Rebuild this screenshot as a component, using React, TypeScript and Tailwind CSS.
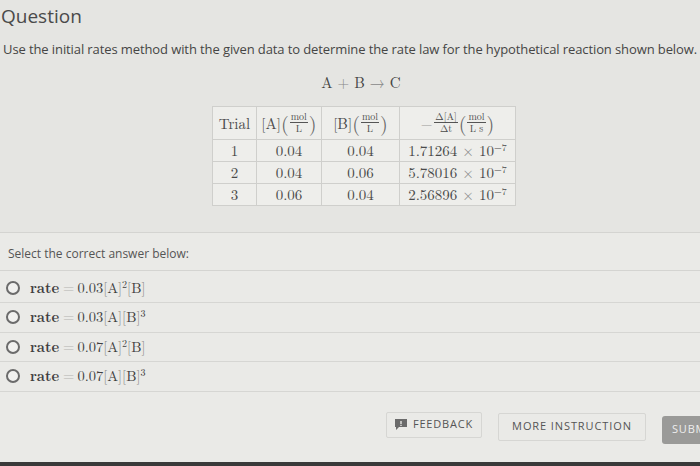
import React from "react";

const serif = { fontFamily: '"Latin Modern Roman", "DejaVu Serif", "Liberation Serif", serif' };

const rows = [
  { trial: "1", a: "0.04", b: "0.04", rate: "1.71264" },
  { trial: "2", a: "0.04", b: "0.06", rate: "5.78016" },
  { trial: "3", a: "0.06", b: "0.04", rate: "2.56896" },
];

function Frac({ top, bottom }: { top: string; bottom: string }) {
  return (
    <span className="inline-flex flex-col items-center align-middle text-[10px] leading-[11px] mx-[1px]">
      <span className="border-b border-[#555] px-[1px]">{top}</span>
      <span>{bottom}</span>
    </span>
  );
}

function Paren({ children }: { children: React.ReactNode }) {
  return (
    <span className="inline-flex items-center align-middle">
      <span className="text-[20px] leading-[22px] text-[#666]">(</span>
      {children}
      <span className="text-[20px] leading-[22px] text-[#666]">)</span>
    </span>
  );
}

function Option({ coef, a, b }: { coef: string; a?: string; b?: string }) {
  return (
    <div className="flex items-center h-[29.5px] border-b border-[#d6d6d3] pl-[6px]">
      <span className="w-[14px] h-[14px] rounded-full border-2 border-[#6b6b6b] bg-[#f1f1ef]" />
      <span className="ml-[10px] text-[14.5px] text-[#3f3f3f] whitespace-nowrap" style={serif}>
        <span className="font-semibold">rate</span>
        <span className="text-[#b5b5b2] ml-[4px] mr-[3px]">=</span>
        {coef}
        <span className="text-[#8a8a8a]">[</span>A<span className="text-[#8a8a8a]">]</span>
        {a && <sup className="text-[10px]">{a}</sup>}
        <span className="text-[#8a8a8a]">[</span>B<span className="text-[#8a8a8a]">]</span>
        {b && <sup className="text-[10px]">{b}</sup>}
      </span>
    </div>
  );
}

export default function App() {
  return (
    <div
      className="w-[700px] h-[466px] overflow-hidden bg-[#e5e5e2] flex flex-col text-[#454545]"
      style={{ fontFamily: '"Open Sans", "Noto Sans", sans-serif' }}
    >
      <h1 className="text-[19px] leading-[24px] mt-[4px] ml-[1px] text-[#4a4a4a]">Question</h1>
      <p className="text-[13px] leading-[18px] mt-[12px] ml-[3px] whitespace-nowrap tracking-[-0.1px]">
        Use the initial rates method with the given data to determine the rate law for the hypothetical reaction shown below.
      </p>
      <div className="text-center text-[15px] mt-[13px] ml-[22px]" style={serif}>
        A <span className="text-[#888]">+</span> B <span className="text-[#888]">→</span> C
      </div>

      <div className="flex justify-center mt-[12px] ml-[28px]">
        <table className="border-collapse bg-[#eeeeeb] text-[15px] text-[#4a4a4a]" style={serif}>
          <thead>
            <tr className="h-[33px]">
              <th className="font-normal border border-[#cfcfcc] w-[44px] leading-[20px]">Trial</th>
              <th className="font-normal border border-[#cfcfcc] w-[65px] whitespace-nowrap leading-[20px]">
                <span className="inline-flex items-center">
                  [A]
                  <Paren>
                    <Frac top="mol" bottom="L" />
                  </Paren>
                </span>
              </th>
              <th className="font-normal border border-[#cfcfcc] w-[78px] whitespace-nowrap leading-[20px]">
                <span className="inline-flex items-center">
                  [B]
                  <Paren>
                    <Frac top="mol" bottom="L" />
                  </Paren>
                </span>
              </th>
              <th className="font-normal border border-[#cfcfcc] w-[116px] whitespace-nowrap leading-[20px]">
                <span className="inline-flex items-center">
                  <span className="text-[#999] mr-[1px]">−</span>
                  <Frac top="Δ[A]" bottom="Δt" />
                  <Paren>
                    <Frac top="mol" bottom="L s" />
                  </Paren>
                </span>
              </th>
            </tr>
          </thead>
          <tbody>
            {rows.map((r) => (
              <tr key={r.trial} className="h-[22px] text-center leading-[18px]">
                <td className="border border-[#cfcfcc]">{r.trial}</td>
                <td className="border border-[#cfcfcc]">{r.a}</td>
                <td className="border border-[#cfcfcc]">{r.b}</td>
                <td className="border border-[#cfcfcc] whitespace-nowrap px-[6px]">
                  {r.rate} <span className="text-[#888]">×</span> 10
                  <sup className="text-[10px] leading-none">−7</sup>
                </td>
              </tr>
            ))}
          </tbody>
        </table>
      </div>

      <div className="mt-[26px] border-t border-[#d4d4d1] bg-[#eaeae7] flex-1 flex flex-col">
        <div className="h-[38px] flex items-center pl-[8px] text-[12px] text-[#555] border-b border-[#d4d4d1] pt-[6px]">
          Select the correct answer below:
        </div>
        <div className="flex flex-col mt-[3px]">
          <Option coef="0.03" a="2" />
          <Option coef="0.03" b="3" />
          <Option coef="0.07" a="2" />
          <Option coef="0.07" b="3" />
        </div>
        <div className="flex justify-end items-start gap-[16px] mt-[20px] -mr-[20px]">
          <button className="h-[26px] w-[96px] flex items-center justify-center gap-[6px] border border-[#d6d6d3] rounded-[2px] text-[11px] tracking-[0.8px] text-[#555]">
            <svg width="12" height="11" viewBox="0 0 12 11">
              <path d="M0 0h12v8H4l-3 3V8H0z" fill="#6b6b6b" />
              <rect x="5.3" y="2" width="1.4" height="3" fill="#e5e5e2" />
              <rect x="5.3" y="5.8" width="1.4" height="1.2" fill="#e5e5e2" />
            </svg>
            FEEDBACK
          </button>
          <button className="h-[28px] w-[148px] mt-[1px] border border-[#d6d6d3] rounded-[2px] text-[11px] tracking-[0.9px] text-[#555]">
            MORE INSTRUCTION
          </button>
          <button className="h-[28px] w-[58px] mt-[4px] pl-[10px] text-left bg-[#9a9a98] rounded-[3px] text-[11px] tracking-[0.8px] text-[#eee] overflow-hidden whitespace-nowrap">
            SUBMIT
          </button>
        </div>
        <div className="flex-1" />
        <div className="h-[4px] bg-[#3a3a3a]" />
      </div>
    </div>
  );
}
